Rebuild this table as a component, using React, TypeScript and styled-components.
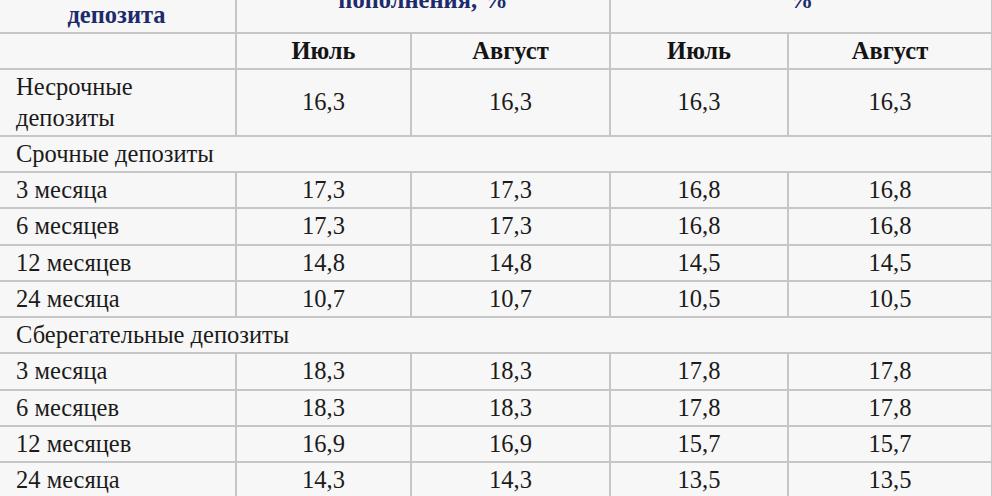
import React from 'react';
import styled, { createGlobalStyle } from 'styled-components';

const GlobalStyle = createGlobalStyle`
  html, body {
    margin: 0;
    padding: 0;
    background: #fbfbfb;
    overflow: hidden;
  }
`;

type Row =
  | { kind: 'group'; title: string }
  | { kind: 'data'; label: string; values: string[] };

const rows: Row[] = [
  { kind: 'data', label: 'Несрочные депозиты', values: ['16,3', '16,3', '16,3', '16,3'] },
  { kind: 'group', title: 'Срочные депозиты' },
  { kind: 'data', label: '3 месяца', values: ['17,3', '17,3', '16,8', '16,8'] },
  { kind: 'data', label: '6 месяцев', values: ['17,3', '17,3', '16,8', '16,8'] },
  { kind: 'data', label: '12 месяцев', values: ['14,8', '14,8', '14,5', '14,5'] },
  { kind: 'data', label: '24 месяца', values: ['10,7', '10,7', '10,5', '10,5'] },
  { kind: 'group', title: 'Сберегательные депозиты' },
  { kind: 'data', label: '3 месяца', values: ['18,3', '18,3', '17,8', '17,8'] },
  { kind: 'data', label: '6 месяцев', values: ['18,3', '18,3', '17,8', '17,8'] },
  { kind: 'data', label: '12 месяцев', values: ['16,9', '16,9', '15,7', '15,7'] },
  { kind: 'data', label: '24 месяца', values: ['14,3', '14,3', '13,5', '13,5'] },
];

const months = ['Июль', 'Август', 'Июль', 'Август'];

const App = (): JSX.Element => {
  return (
    <>
      <GlobalStyle />
      <Page>
        <RateTable>
          <colgroup>
            <col style={{ width: 239 }} />
            <col style={{ width: 175 }} />
            <col style={{ width: 199 }} />
            <col style={{ width: 178 }} />
            <col style={{ width: 204 }} />
          </colgroup>
          <thead>
            <TopHeadRow>
              <TitleCell $valign="bottom">депозита</TitleCell>
              <TitleCell colSpan={2} $valign="top">
                пополнения, %
              </TitleCell>
              <TitleCell colSpan={2} $valign="top">
                %
              </TitleCell>
            </TopHeadRow>
            <tr>
              <MonthCell />
              {months.map((m, i) => (
                <MonthCell key={i}>{m}</MonthCell>
              ))}
            </tr>
          </thead>
          <tbody>
            {rows.map((row, i) =>
              row.kind === 'group' ? (
                <tr key={i}>
                  <LabelCell colSpan={5}>{row.title}</LabelCell>
                </tr>
              ) : (
                <tr key={i}>
                  <LabelCell>{row.label}</LabelCell>
                  {row.values.map((v, j) => (
                    <ValueCell key={j}>{v}</ValueCell>
                  ))}
                </tr>
              ),
            )}
          </tbody>
        </RateTable>
      </Page>
    </>
  );
};

const Page = styled.div`
  width: 992px;
  height: 496px;
  overflow: hidden;
`;

const RateTable = styled.table`
  table-layout: fixed;
  width: 995px;
  margin-left: -4px;
  margin-top: -19px;
  border-collapse: collapse;
  background: #f7f7f7;
  font-family: 'Liberation Serif', 'Times New Roman', serif;
  color: #1b1b1b;
  font-size: 24.5px;
  line-height: 30.25px;

  th,
  td {
    border: 2px solid #c6c6c6;
    padding: 2px 10px;
  }
`;

const TopHeadRow = styled.tr`
  height: 51px;
`;

const TitleCell = styled.th<{ $valign: 'bottom' | 'top' }>`
  color: #1d2b6c;
  font-weight: bold;
  text-align: center;
  vertical-align: ${(p) => p.$valign};
`;

const MonthCell = styled.th`
  font-weight: bold;
  text-align: center;
  color: #141414;
`;

const LabelCell = styled.td`
  text-align: left;
  && {
    padding-left: 18px;
  }
`;

const ValueCell = styled.td`
  text-align: center;
`;

export default App;
